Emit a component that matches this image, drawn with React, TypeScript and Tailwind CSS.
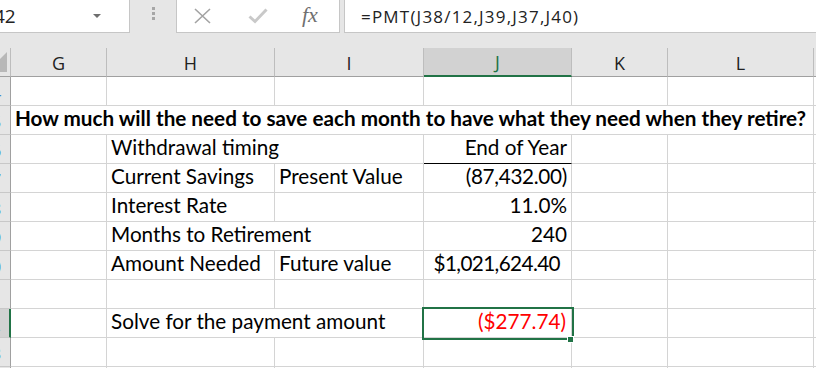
import type { ReactNode } from 'react';

const cellFont = { fontFamily: 'Lato, "Open Sans", sans-serif' };

function RowHead({ n, selected }: { n: number; selected?: boolean }) {
	return (
		<div
			className={`w-[31px] h-full shrink-0 flex items-end justify-center pb-[4px] pr-[7px] border-b border-[#c8c8c8] text-[17px] leading-none text-[#3f86cf] font-['Open_Sans',sans-serif] ${
				selected ? 'bg-[#d2d2d2] border-r-2 border-r-[#217346]' : 'bg-[#e6e6e6] border-r border-r-[#a0a0a0]'
			}`}
		>
			{n}
		</div>
	);
}

function Cell({
	w,
	right,
	children,
	className = '',
	color = 'text-black',
}: {
	w: string;
	right?: boolean;
	children?: ReactNode;
	className?: string;
	color?: string;
}) {
	return (
		<div
			className={`${w} h-full shrink-0 relative flex items-end pb-[5px] px-[4px] whitespace-nowrap border-r border-b border-[#d4d4d4] bg-white text-[20.7px] leading-none ${color} ${
				right ? 'justify-end' : ''
			} ${className}`}
		>
			{children}
		</div>
	);
}

function Row({ n, selected, children }: { n: number; selected?: boolean; children: ReactNode }) {
	return (
		<div className="flex h-[29px]" style={cellFont}>
			<RowHead n={n} selected={selected} />
			{children}
			<Cell w="w-[80px]" />
		</div>
	);
}

function Blank({ n }: { n: number }) {
	return (
		<Row n={n}>
			<Cell w="w-[96px]" />
			<Cell w="w-[168px]" />
			<Cell w="w-[149px]" />
			<Cell w="w-[148px]" />
			<Cell w="w-[96px]" />
			<Cell w="w-[146px]" />
		</Row>
	);
}

const headers = [
	{ l: 'G', w: 'w-[96px]' },
	{ l: 'H', w: 'w-[168px]' },
	{ l: 'I', w: 'w-[149px]' },
	{ l: 'J', w: 'w-[148px]' },
	{ l: 'K', w: 'w-[96px]' },
	{ l: 'L', w: 'w-[146px]' },
	{ l: 'M', w: 'w-[80px]' },
];

export default function App() {
	return (
		<div className="w-[816px] h-[368px] overflow-hidden bg-[#e6e6e6]">
			<div className="-ml-[20px] w-[860px]">
				{/* formula bar */}
				<div className="flex h-[33px] font-['Open_Sans',sans-serif]">
					<div className="w-[150px] shrink-0 h-full bg-white border-r border-b border-[#c6c6c6] flex items-center justify-between pl-[14px] pr-[28px]">
						<span className="text-[19px] leading-none text-[#222]">42</span>
						<svg width="8" height="4" viewBox="0 0 8 4">
							<path d="M0 0h8L4 4z" fill="#6e6e6e" />
						</svg>
					</div>
					<div className="w-[46px] shrink-0 flex flex-col items-center gap-[2px] pt-[7px] pl-[1px]">
						<span className="w-[3px] h-[3px] bg-[#a6a6a6]" />
						<span className="w-[3px] h-[3px] bg-[#a6a6a6]" />
						<span className="w-[3px] h-[3px] bg-[#a6a6a6]" />
					</div>
					<div className="w-[164px] shrink-0 h-full bg-white border-x border-b border-[#c6c6c6] flex items-center pl-[16px]">
						<svg width="19" height="16" viewBox="0 0 19 16" className="shrink-0">
							<path d="M2 1L17 15M17 1L2 15" stroke="#a3a3a3" strokeWidth="1.6" fill="none" />
						</svg>
						<svg width="20" height="16" viewBox="0 0 20 16" className="shrink-0 ml-[36px]">
							<path d="M1.5 8.5L7 13.5L18.5 1.5" stroke="#c9c9c9" strokeWidth="3" fill="none" />
						</svg>
						<span className="ml-[34px] italic text-[22px] leading-none text-[#707070] font-['Liberation_Serif',serif] -mt-[2px]">
							fx
						</span>
					</div>
					<div className="w-[4px] shrink-0" />
					<div className="flex-1 h-full bg-white border-l border-b border-[#c6c6c6] flex items-center pl-[16px] text-[17px] tracking-[1.2px] leading-none text-[#222]">
						=PMT(J38/12,J39,J37,J40)
					</div>
				</div>

				<div className="h-[15px]" />

				{/* column headers */}
				<div className="flex h-[29px] font-['Open_Sans',sans-serif]">
					<div className="w-[31px] h-full shrink-0 border-r border-[#bdbdbd] border-b border-b-[#a0a0a0] relative">
						<svg width="31" height="28" viewBox="0 0 31 28" className="absolute left-0 top-0">
							<path d="M27 4V24H7z" fill="#b8b8b8" />
						</svg>
					</div>
					{headers.map((h) => (
						<div
							key={h.l}
							className={`${h.w} h-full shrink-0 flex items-end justify-center pb-[4px] text-[18px] leading-none border-r ${
								h.l === 'J'
									? 'bg-[#d2d2d2] text-[#217346] border-r-[#bdbdbd] border-b-2 border-b-[#217346]'
									: 'text-[#222] border-r-[#bdbdbd] border-b border-b-[#a0a0a0]'
							}`}
						>
							{h.l}
						</div>
					))}
				</div>

				<Blank n={34} />
				<Row n={35}>
					<Cell w="w-[803px]" className="font-bold">
						How much will the need to save each month to have what they need when they retire?
					</Cell>
				</Row>
				<Row n={36}>
					<Cell w="w-[96px]" />
					<Cell w="w-[317px]">Withdrawal timing</Cell>
					<Cell w="w-[148px]" right className="border-b-black">
						End of Year
					</Cell>
					<Cell w="w-[96px]" />
					<Cell w="w-[146px]" />
				</Row>
				<Row n={37}>
					<Cell w="w-[96px]" />
					<Cell w="w-[168px]">Current Savings</Cell>
					<Cell w="w-[149px]">Present Value</Cell>
					<Cell w="w-[148px]" right className="tracking-[-0.3px]">
						(87,432.00)
					</Cell>
					<Cell w="w-[96px]" />
					<Cell w="w-[146px]" />
				</Row>
				<Row n={38}>
					<Cell w="w-[96px]" />
					<Cell w="w-[168px]">Interest Rate</Cell>
					<Cell w="w-[149px]" />
					<Cell w="w-[148px]" right>
						11.0%
					</Cell>
					<Cell w="w-[96px]" />
					<Cell w="w-[146px]" />
				</Row>
				<Row n={39}>
					<Cell w="w-[96px]" />
					<Cell w="w-[317px]">Months to Retirement</Cell>
					<Cell w="w-[148px]" right>
						240
					</Cell>
					<Cell w="w-[96px]" />
					<Cell w="w-[146px]" />
				</Row>
				<Row n={40}>
					<Cell w="w-[96px]" />
					<Cell w="w-[168px]">Amount Needed</Cell>
					<Cell w="w-[149px]">Future value</Cell>
					<Cell w="w-[148px]" right className="pr-[11px] tracking-[-0.6px]">
						$1,021,624.40
					</Cell>
					<Cell w="w-[96px]" />
					<Cell w="w-[146px]" />
				</Row>
				<Blank n={41} />
				<Row n={42} selected>
					<Cell w="w-[96px]" />
					<Cell w="w-[317px]">Solve for the payment amount</Cell>
					<Cell w="w-[148px]" right className="pr-[5px] z-10" color="text-[#ff0000]">
						($277.74)
						<span className="absolute -left-[2px] -top-[2px] w-[152px] h-[33px] border-2 border-[#217346]" />
						<span className="absolute left-[143px] top-[27px] w-[7px] h-[7px] bg-[#217346] border border-white" />
					</Cell>
					<Cell w="w-[96px]" />
					<Cell w="w-[146px]" />
				</Row>
				<Blank n={43} />
				<Blank n={44} />
			</div>
		</div>
	);
}
